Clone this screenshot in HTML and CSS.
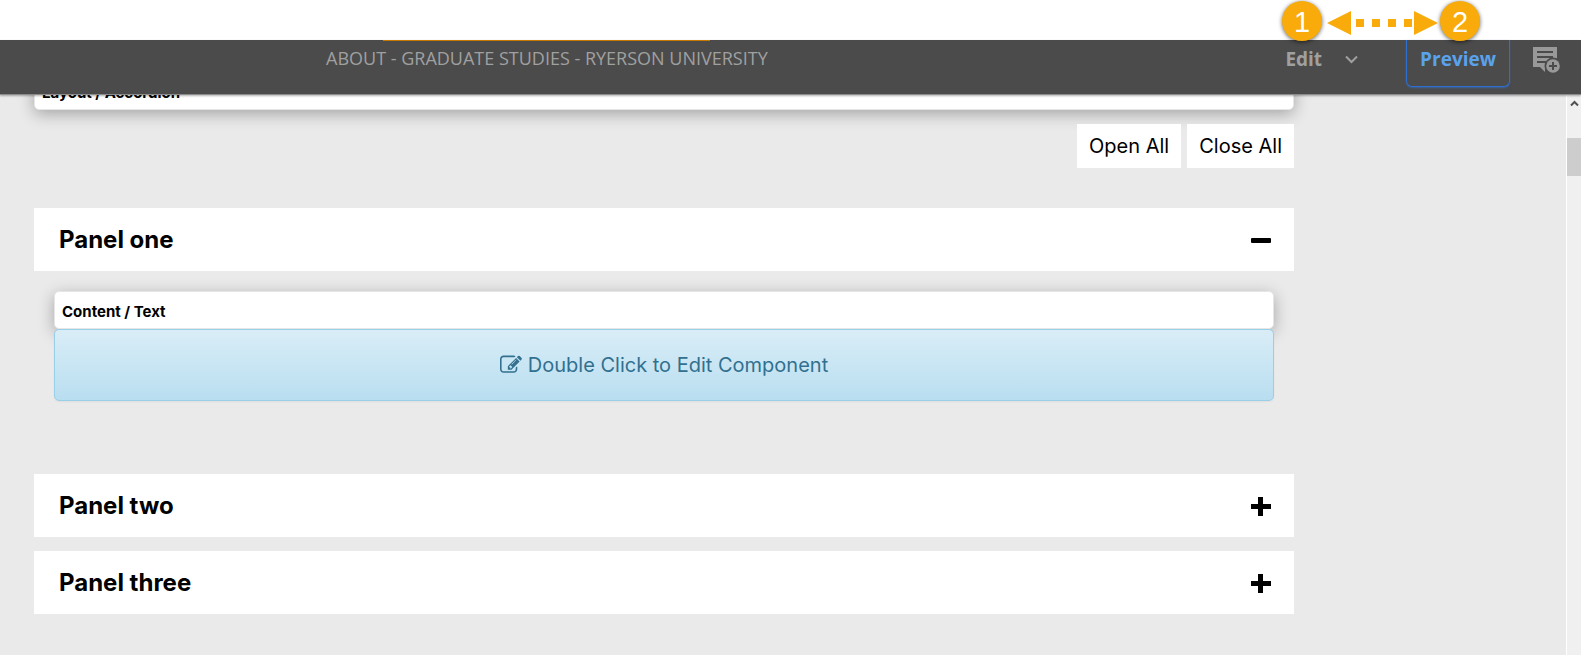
FILE: index.html
```html
<!DOCTYPE html>
<html lang="en">
<head>
  <meta charset="UTF-8">
  <title>About - Graduate Studies - Ryerson University</title>
  <link rel="stylesheet" href="styles.css">
</head>
<body>
  <header class="toolbar">
    <div class="page-title">ABOUT - GRADUATE STUDIES - RYERSON UNIVERSITY</div>
    <div class="actions">
      <button class="mode">Edit
        <svg width="13" height="9" viewBox="0 0 13 9"><path d="M1 1.500l5.500 5.500L12 1.500" fill="none" stroke="#a0a0a0" stroke-width="2"/></svg>
      </button>
      <button class="preview">Preview</button>
      <button class="annotate" aria-label="Annotate">
        <svg width="27" height="27" viewBox="0 0 27 27">
          <path fill="#999" d="M0 0h24v20H12v5l-5-5H0z"/>
          <path stroke="#4b4b4b" stroke-width="2" d="M4 5h16M4 10h16M4 15h9"/>
          <circle cx="20" cy="19" r="8.500" fill="#4b4b4b"/>
          <circle cx="20" cy="19" r="6.800" fill="#999"/>
          <path stroke="#4b4b4b" stroke-width="2" d="M20 15v8M16 19h8"/>
        </svg>
      </button>
    </div>
    <!-- step markers over Edit and Preview -->
    <div class="steps">
      <span class="step">1</span>
      <svg width="111" height="24" viewBox="0 0 111 24" fill="#f8ab0a">
        <path d="M0 12L24 0v24zM29 8h8v8h-8zM45 8h8v8h-8zM61 8h8v8h-8zM77 8h8v8h-8zM111 12L87 0v24z"/>
      </svg>
      <span class="step">2</span>
    </div>
  </header>

  <div class="viewport">
    <main class="content">
      <div class="component-bar">Layout / Accordion</div>

      <div class="controls">
        <button>Open All</button>
        <button>Close All</button>
      </div>

      <section class="panel">
        <h2><button class="panel-heading" aria-expanded="true">Panel one
          <svg width="20" height="20" viewBox="0 0 20 20"><rect y="8" width="20" height="5" rx="1"/></svg>
        </button></h2>
        <div class="panel-body">
          <div class="component-bar">Content / Text</div>
          <button class="placeholder">
            <svg width="22" height="22" viewBox="0 0 1792 1792" fill="#31708f"><path d="M888 1184l116-116-152-152-116 116v56h96v96h56zm440-720q-16-16-33 1l-350 350q-17 17-1 33t33-1l350-350q17-17 1-33zm80 594v190q0 119-84.500 203.500t-203.500 84.500h-832q-119 0-203.500-84.500t-84.500-203.500v-832q0-119 84.500-203.500t203.500-84.500h832q63 0 117 25 15 7 18 23 3 17-9 29l-49 49q-14 14-32 8-23-6-45-6h-832q-66 0-113 47t-47 113v832q0 66 47 113t113 47h832q66 0 113-47t47-113v-126q0-13 9-22l64-64q15-15 35-7t20 29zm-96-738l288 288-672 672h-288v-288zm444 132l-92 92-288-288 92-92q28-28 68-28t68 28l152 152q28 28 28 68t-28 68z"/></svg>
            Double Click to Edit Component
          </button>
        </div>
      </section>

      <section class="panel">
        <h2><button class="panel-heading" aria-expanded="false">Panel two
          <svg width="20" height="20" viewBox="0 0 20 20"><path d="M7 1h5v7h8v5h-8v7H7v-7H0V8h7z"/></svg>
        </button></h2>
      </section>

      <section class="panel">
        <h2><button class="panel-heading" aria-expanded="false">Panel three
          <svg width="20" height="20" viewBox="0 0 20 20"><path d="M7 1h5v7h8v5h-8v7H7v-7H0V8h7z"/></svg>
        </button></h2>
      </section>
    </main>

    <div class="scrollbar">
      <button class="scroll-up" aria-label="Scroll up">
        <svg width="9" height="7" viewBox="0 0 9 7"><path d="M1 5.500L4.500 2 8 5.500" fill="none" stroke="#505050" stroke-width="2"/></svg>
      </button>
      <div class="thumb"></div>
    </div>
  </div>
</body>
</html>
```
FILE: styles.css
```css
* {
  box-sizing: border-box;
}
body {
  margin: 0;
  padding-top: 40px;
  height: 100vh;
  display: flex;
  flex-direction: column;
  overflow: hidden;
  background: #fff;
  font-family: Inter, "Liberation Sans", sans-serif;
  color: #000;
}
button {
  border: none;
  margin: 0;
  padding: 0;
  background: none;
  color: inherit;
  font: inherit;
  cursor: pointer;
}
svg {
  display: block;
  flex: none;
}

/* toolbar */
.toolbar {
  position: relative;
  z-index: 1;
  display: flex;
  justify-content: space-between;
  height: 55px;
  padding: 0 21px 0 326px;
  background: #4b4b4b;
  border-bottom: 1px solid #8c8c8c;
  box-shadow: 0 1px 2px rgba(0, 0, 0, 0.3);
  font-family: "Open Sans", "Noto Sans", sans-serif;
}
.page-title {
  height: 38px;
  line-height: 36px;
  font-size: 18px;
  color: #a0a0a0;
  background: linear-gradient(#c87800, #c87800) center top / 327px 1px no-repeat;
}
.actions {
  display: flex;
  align-items: flex-start;
  font-size: 19px;
  font-weight: 700;
}
.mode {
  display: flex;
  align-items: center;
  gap: 23px;
  height: 38px;
  color: #a0a0a0;
}
.preview {
  height: 47px;
  margin-left: 48px;
  padding: 0 13px 8px;
  border: 1px solid #2f6fcf;
  border-top: none;
  border-radius: 0 0 6px 6px;
  box-shadow: 0 1px 2px rgba(47, 111, 207, 0.6);
  color: #5aa2ec;
}
.annotate {
  margin: 7px 0 0 23px;
}
.steps {
  position: absolute;
  top: -39px;
  right: 101px;
  display: flex;
  align-items: center;
}
.steps svg {
  margin: 4px 2px 0 5px;
}
.step {
  width: 40px;
  height: 40px;
  border-radius: 50%;
  background: #f8ab0a;
  box-shadow: 0 1px 4px rgba(0, 0, 0, 0.6);
  color: #fff;
  font: 29px/42px "Liberation Sans", Arial, sans-serif;
  text-align: center;
}

/* page */
.viewport {
  flex: 1;
  min-height: 0;
  display: flex;
  overflow: hidden;
  background: #eaeaea;
}
.content {
  flex: 1;
  margin-top: -23px;
  padding: 0 272px 0 34px;
}
.component-bar {
  height: 38px;
  padding: 0 7px;
  border: 1px solid #e6e6e6;
  border-radius: 5px;
  background: #fff;
  box-shadow: 0 4px 16px rgba(0, 0, 0, 0.3);
  font-size: 15px;
  line-height: 39px;
  font-weight: 700;
}
.controls {
  display: flex;
  justify-content: flex-end;
  gap: 6px;
  margin: 14px 0 40px;
}
.controls button {
  height: 44px;
  padding: 0 12px;
  background: #fff;
  font-size: 20px;
}
.panel {
  margin-bottom: 14px;
}
.panel h2 {
  margin: 0;
  font-size: 24px;
  font-weight: 700;
}
.panel-heading {
  display: flex;
  justify-content: space-between;
  align-items: center;
  width: 100%;
  height: 63px;
  padding: 0 23px 0 25px;
  background: #fff;
}
.panel-body {
  padding: 20px 20px 59px;
}
.placeholder {
  position: relative;
  display: flex;
  justify-content: center;
  align-items: center;
  gap: 6px;
  width: 100%;
  height: 72px;
  border: 1px solid #9acfea;
  border-radius: 5px;
  background: linear-gradient(#d9edf7, #b9def0);
  box-shadow: 0 1px 2px rgba(0, 0, 0, 0.05);
  color: #31708f;
  font-size: 20px;
}

/* scrollbar */
.scrollbar {
  width: 15px;
  border-left: 1px solid #fff;
  background: #f0f0f0;
}
.scroll-up {
  display: flex;
  justify-content: center;
  align-items: center;
  width: 100%;
  height: 17px;
}
.thumb {
  height: 38px;
  margin-top: 26px;
  background: #cdcdcd;
}
```
